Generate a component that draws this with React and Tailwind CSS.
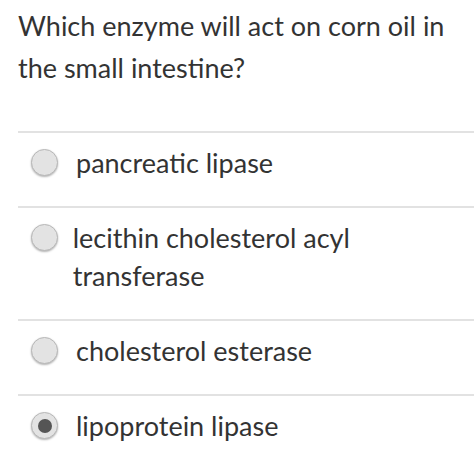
import React from "react";

function Radio({ checked }) {
  return (
    <div className="w-[27px] h-[27px] shrink-0 rounded-full border border-[#b8b8b8] bg-[#e3e3e3] shadow-[0_1px_2px_rgba(0,0,0,0.3)] flex items-center justify-center">
      {checked && <div className="w-[14px] h-[14px] rounded-full bg-[#555555]" />}
    </div>
  );
}

function Option({ label, checked }) {
  return (
    <div className="flex items-start border-t-2 border-[#e2e2e2] pt-[11px] pb-[24px]">
      <div className="w-[58px] pl-[13px] pt-[5px]">
        <Radio checked={checked} />
      </div>
      <div className="text-[27px] leading-[38px] text-[#333333] pr-4">{label}</div>
    </div>
  );
}

export default function App() {
  return (
    <div
      className="w-[474px] h-[473px] bg-white overflow-hidden"
      style={{ fontFamily: "Lato, 'Noto Sans', sans-serif" }}
    >
      <div className="pl-[18px]">
        <div className="pt-[5px] pb-[42px] pr-4 text-[27px] leading-[42px] text-[#333333]">
          Which enzyme will act on corn oil in the small intestine?
        </div>
        <Option label="pancreatic lipase" />
        <Option label="lecithin cholesterol acyl transferase" />
        <Option label="cholesterol esterase" />
        <Option label="lipoprotein lipase" checked />
      </div>
    </div>
  );
}
